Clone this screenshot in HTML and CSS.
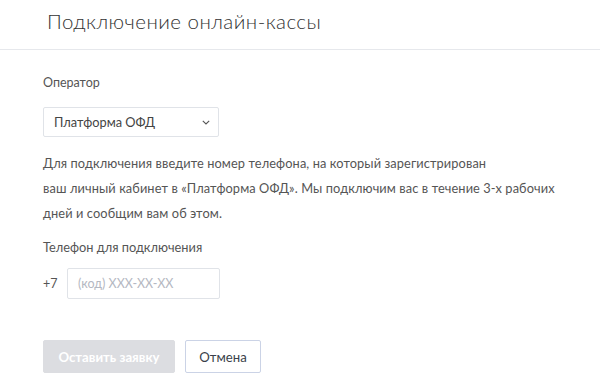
FILE: index.html
```html
<!DOCTYPE html>
<html lang="ru">
<head>
<meta charset="utf-8">
<link rel="stylesheet" href="styles.css">
</head>
<body>
<header class="header">
  <h1 class="title">Подключение онлайн-кассы</h1>
</header>
<main class="form">
  <div class="label">Оператор</div>
  <div class="select">
    <span class="select-value">Платформа ОФД</span>
    <svg class="chevron" width="8" height="5" viewBox="0 0 8 5"><path d="M0.8 0.8 L4 4 L7.2 0.8" fill="none" stroke="#555" stroke-width="1.1"/></svg>
  </div>
  <p class="text">Для подключения введите номер телефона, на который зарегистрирован<br>ваш личный кабинет в «Платформа ОФД». Мы подключим вас в течение 3-х рабочих<br>дней и сообщим вам об этом.</p>
  <div class="label label-phone">Телефон для подключения</div>
  <div class="phone-row">
    <span class="prefix">+7</span>
    <div class="input"><span class="placeholder">(код) XXX-XX-XX</span></div>
  </div>
  <div class="actions">
    <button class="btn btn-primary" disabled>Оставить заявку</button>
    <button class="btn btn-cancel">Отмена</button>
  </div>
</main>
</body>
</html>
```
FILE: styles.css
```css
html, body {
  margin: 0;
  padding: 0;
  background: #fff;
}
body {
  font-family: "Lato", "Liberation Sans", sans-serif;
  color: #555;
  width: 600px;
  height: 392px;
  overflow: hidden;
}
.header {
  height: 50px;
  border-bottom: 1px solid #e6e8ec;
  box-sizing: border-box;
  padding-left: 47px;
  display: flex;
  align-items: flex-start;
}
.title {
  margin: 0;
  padding-top: 9px;
  font-size: 20.5px;
  line-height: 24px;
  font-weight: 300;
  letter-spacing: 0.45px;
  color: #333;
}
.form {
  padding: 25px 0 0 43px;
  display: flex;
  flex-direction: column;
  align-items: flex-start;
}
.label {
  font-size: 12.5px;
  line-height: 16px;
  color: #555;
}
.select {
  margin-top: 16px;
  width: 176px;
  height: 30px;
  box-sizing: border-box;
  border: 1px solid #e0e3e8;
  border-radius: 2px;
  display: flex;
  align-items: center;
  justify-content: space-between;
  padding: 0 8px 0 10px;
  font-size: 12.8px;
  color: #444;
}
.chevron {
  display: block;
}
.text {
  margin: 14px 0 0;
  font-size: 12.8px;
  line-height: 25px;
  letter-spacing: 0.1px;
  color: #555;
}
.label-phone {
  margin-top: 13px;
  font-size: 12.8px;
}
.phone-row {
  margin-top: 13px;
  display: flex;
  align-items: center;
}
.prefix {
  font-size: 12.5px;
  color: #555;
  width: 24px;
}
.input {
  width: 153px;
  height: 31px;
  box-sizing: border-box;
  border: 1px solid #e0e3e8;
  border-radius: 2px;
  display: flex;
  align-items: center;
  padding-left: 10px;
}
.placeholder {
  font-size: 12.5px;
  color: #b4b8c2;
}
.actions {
  margin-top: 41px;
  display: flex;
  gap: 10px;
}
.btn {
  height: 33px;
  box-sizing: border-box;
  font-family: "Lato", "Liberation Sans", sans-serif;
  font-size: 13.2px;
  border-radius: 2px;
  padding: 0;
}
.btn-primary {
  width: 132px;
  background: #dcdde1;
  border: 1px solid #dcdde1;
  color: #fff;
  font-weight: 700;
}
.btn-cancel {
  width: 76px;
  background: #fff;
  border: 1px solid #cbd3e6;
  color: #3a3f4a;
}
```
